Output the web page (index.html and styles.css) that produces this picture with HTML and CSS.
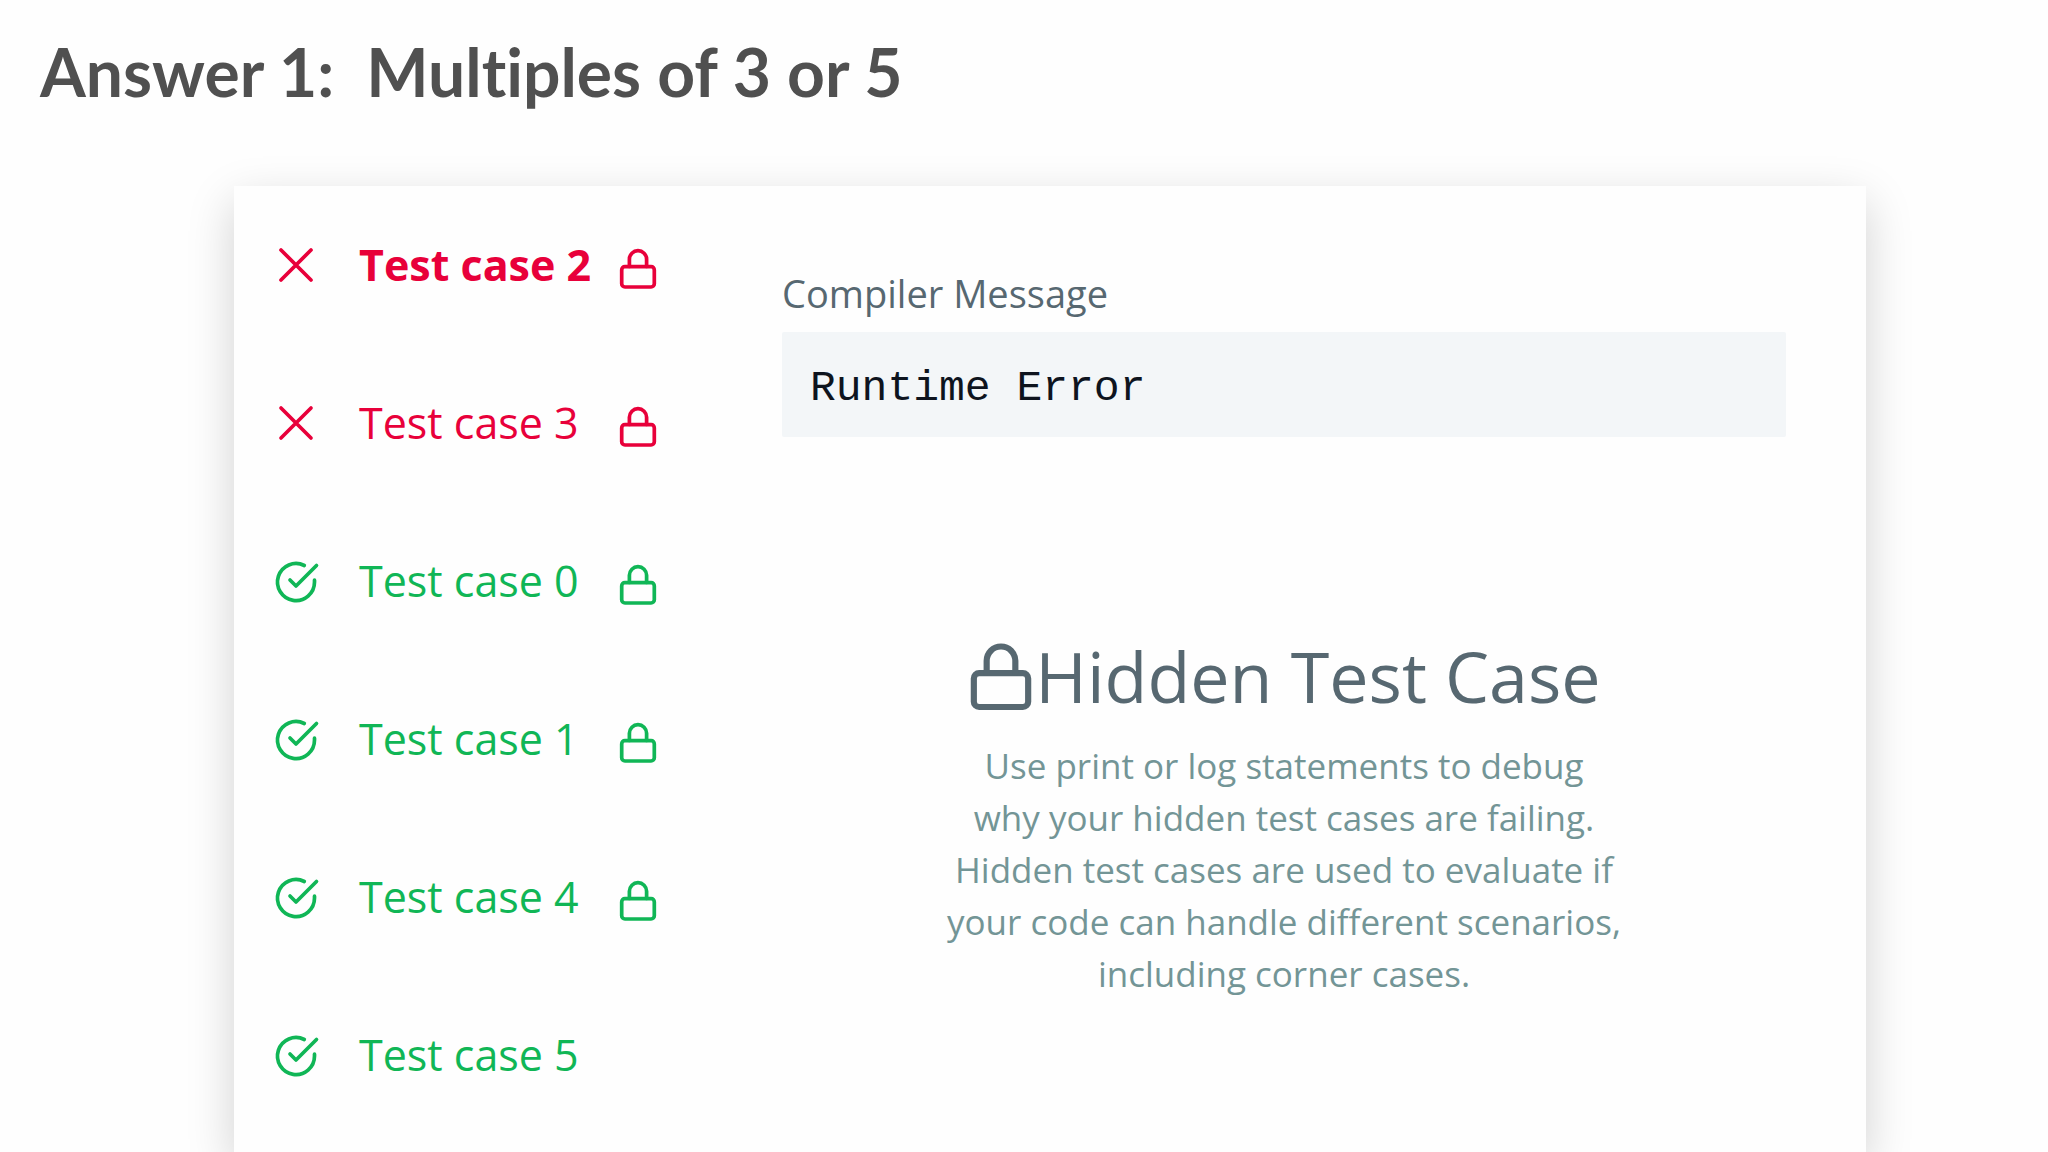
FILE: index.html
```html
<!DOCTYPE html>
<html lang="en">
<head>
    <meta charset="utf-8">
    <title>Answer 1: Multiples of 3 or 5</title>
    <link rel="stylesheet" href="styles.css">
</head>
<body>
    <!-- shared icons -->
    <svg class="icon-defs" aria-hidden="true">
        <symbol id="icon-cross" viewBox="0 0 48 48">
            <path d="M9 8L39 38M39 8L9 38"/>
        </symbol>
        <symbol id="icon-check" viewBox="0 0 48 48">
            <path d="M42.5 22.2V24A18.5 18.5 0 1 1 32.3 7.5"/>
            <path d="M18 22L24 28L44.5 7.5"/>
        </symbol>
        <symbol id="icon-lock" viewBox="0 0 40 48">
            <rect x="3.7" y="24.7" width="32.6" height="20.3" rx="3.2"/>
            <path d="M11.4 24.5V17.3a8.6 8.6 0 0 1 17.2 0v7.2"/>
        </symbol>
    </svg>

    <h1>Answer 1:&nbsp; Multiples of 3 or 5</h1>

    <main class="card">
        <nav class="test-cases" aria-label="Test cases">
            <button type="button" class="test-case failed selected">
                <svg class="status"><use href="#icon-cross"/></svg>
                <span>Test case 2</span>
                <svg class="lock"><use href="#icon-lock"/></svg>
            </button>
            <button type="button" class="test-case failed">
                <svg class="status"><use href="#icon-cross"/></svg>
                <span>Test case 3</span>
                <svg class="lock"><use href="#icon-lock"/></svg>
            </button>
            <button type="button" class="test-case passed">
                <svg class="status"><use href="#icon-check"/></svg>
                <span>Test case 0</span>
                <svg class="lock"><use href="#icon-lock"/></svg>
            </button>
            <button type="button" class="test-case passed">
                <svg class="status"><use href="#icon-check"/></svg>
                <span>Test case 1</span>
                <svg class="lock"><use href="#icon-lock"/></svg>
            </button>
            <button type="button" class="test-case passed">
                <svg class="status"><use href="#icon-check"/></svg>
                <span>Test case 4</span>
                <svg class="lock"><use href="#icon-lock"/></svg>
            </button>
            <button type="button" class="test-case passed">
                <svg class="status"><use href="#icon-check"/></svg>
                <span>Test case 5</span>
            </button>
        </nav>

        <section class="details">
            <h2>Compiler Message</h2>
            <pre class="message">Runtime Error</pre>

            <div class="hidden-case">
                <h3><svg class="big-lock"><use href="#icon-lock"/></svg>Hidden Test Case</h3>
                <p>Use print or log statements to debug<br>
                why your hidden test cases are failing.<br>
                Hidden test cases are used to evaluate if<br>
                your code can handle different scenarios,<br>
                including corner cases.</p>
            </div>
        </section>
    </main>
</body>
</html>
```
FILE: styles.css
```css
* {
    box-sizing: border-box;
}

body {
    display: flex;
    flex-direction: column;
    min-height: 100vh;
    margin: 0;
    background-color: #fefefe;
    font-family: "Open Sans", "Noto Sans", sans-serif;
    overflow-x: hidden;
}

svg {
    flex: none;
    fill: none;
    stroke: currentColor;
    stroke-width: 3.7;
    stroke-linecap: round;
    stroke-linejoin: round;
}

.icon-defs {
    position: absolute;
    width: 0;
    height: 0;
}

h1 {
    margin: 0;
    padding: 32px 40px 74px;
    color: #505050;
    font-family: Lato, sans-serif;
    font-size: 66px;
    font-weight: bold;
    font-variant-ligatures: none;
    line-height: 80px;
}

.card {
    display: flex;
    flex: 1;
    margin: 0 182px 0 234px;
    background-color: #fefefe;
    box-shadow: 0 16px 44px rgba(0, 0, 0, 0.18);
}

.test-cases {
    display: flex;
    flex-direction: column;
    gap: 58px;
    width: 508px;
    padding: 30px 0 0 38px;
}

.test-case {
    display: flex;
    align-items: center;
    height: 100px;
    padding: 0;
    border: none;
    background: none;
    font-family: inherit;
    font-size: 43px;
    text-align: left;
    white-space: nowrap;
    cursor: pointer;
}

.test-case span {
    width: 298px;
    padding: 0 0 4px 39px;
}

.failed {
    color: #e8003a;
}

.passed {
    color: #10b656;
}

.selected {
    font-weight: bold;
}

.status {
    width: 48px;
    height: 48px;
}

.lock {
    width: 40px;
    height: 48px;
}

.details {
    flex: 1;
    padding: 79px 80px 0 40px;
}

.details h2 {
    margin: 0;
    color: #576871;
    font-size: 38px;
    font-weight: normal;
    line-height: 56px;
}

.message {
    margin: 11px 0 0;
    padding: 28px 28px 20px;
    border-radius: 2px;
    background-color: #f3f6f8;
    color: #0e141e;
    font-family: "Liberation Mono", monospace;
    font-size: 43px;
    line-height: 57px;
}

.hidden-case {
    margin-top: 187px;
    text-align: center;
}

.hidden-case h3 {
    display: flex;
    justify-content: center;
    align-items: center;
    margin: 0;
    color: #576871;
    font-size: 70px;
    font-weight: normal;
    line-height: 104px;
    white-space: nowrap;
}

.big-lock {
    width: 68px;
    height: 80px;
    margin-bottom: 8px;
}

.hidden-case p {
    margin: 12px 0 0;
    color: #739596;
    font-size: 35px;
    line-height: 52px;
}
```
